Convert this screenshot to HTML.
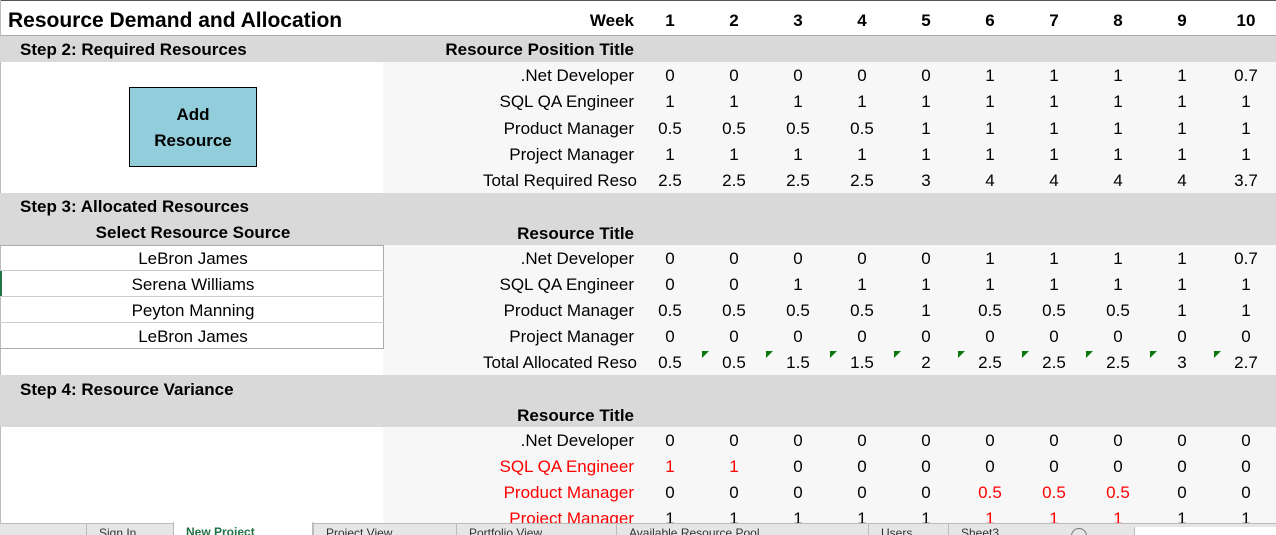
<!DOCTYPE html>
<html><head><meta charset="utf-8"><style>
body{margin:0;width:1276px;height:535px;overflow:hidden;background:#fff;font-family:"Liberation Sans Narrow","Liberation Sans",sans-serif;position:relative}
div{position:absolute;box-sizing:border-box}
.g{background:#d9d9d9;left:0;width:1276px}
.lt{background:#f7f7f7;left:383px;width:893px}
.t{font-size:17px;color:#000;white-space:nowrap;line-height:26px;height:26px;margin-top:1px}
.b{font-weight:bold}
.lab{left:383px;width:251px;text-align:right}
.r{color:#f00}
.row span{position:absolute;width:64px;text-align:center;top:0}
.tri{width:0;height:0;border-top:7px solid #0a7a0a;border-right:7px solid transparent}
.tab{top:523px;height:12px;border-left:1px solid #bbb;font-size:12px;line-height:20px;color:#333;overflow:hidden;padding-left:12px}
</style></head><body>
<div style="left:0;top:0;width:1276px;height:2px;border-top:1px solid #555"></div>
<div style="left:0;top:0;width:1px;height:523px;background:#bbb"></div>
<div class="t b" style="left:8px;top:7px;font-size:21px;font-family:'Liberation Sans',sans-serif">Resource Demand and Allocation</div>
<div class="g" style="top:35px;height:27px;border-top:1px solid #aaa"></div>
<div class="lt" style="top:62px;height:131px"></div>
<div class="g" style="top:193px;height:52px"></div>
<div class="lt" style="top:245px;height:130px"></div>
<div class="g" style="top:375px;height:52px"></div>
<div class="lt" style="top:427px;height:96px"></div>

<div class="t b row" style="left:0;top:7px;width:1276px">
<span style="left:560px;width:74px;text-align:right">Week</span>
<span style="left:638px">1</span><span style="left:702px">2</span><span style="left:766px">3</span><span style="left:830px">4</span><span style="left:894px">5</span><span style="left:958px">6</span><span style="left:1022px">7</span><span style="left:1086px">8</span><span style="left:1150px">9</span><span style="left:1214px">10</span></div>

<div class="t b" style="left:20px;top:36px">Step 2: Required Resources</div>
<div class="t b lab" style="top:36px">Resource Position Title</div>
<div style="left:129px;top:87px;width:128px;height:80px;background:#92cddc;border:1px solid #000;text-align:center;font-weight:bold;font-size:17px;line-height:26px;padding-top:14px;font-family:'Liberation Sans',sans-serif">Add<br>Resource</div>

<div class="t lab" style="top:62px">.Net Developer</div>
<div class="t row" style="left:0;top:62px;width:1276px"><span style="left:638px">0</span><span style="left:702px">0</span><span style="left:766px">0</span><span style="left:830px">0</span><span style="left:894px">0</span><span style="left:958px">1</span><span style="left:1022px">1</span><span style="left:1086px">1</span><span style="left:1150px">1</span><span style="left:1214px">0.7</span></div>
<div class="t lab" style="top:88px">SQL QA Engineer</div>
<div class="t row" style="left:0;top:88px;width:1276px"><span style="left:638px">1</span><span style="left:702px">1</span><span style="left:766px">1</span><span style="left:830px">1</span><span style="left:894px">1</span><span style="left:958px">1</span><span style="left:1022px">1</span><span style="left:1086px">1</span><span style="left:1150px">1</span><span style="left:1214px">1</span></div>
<div class="t lab" style="top:115px">Product Manager</div>
<div class="t row" style="left:0;top:115px;width:1276px"><span style="left:638px">0.5</span><span style="left:702px">0.5</span><span style="left:766px">0.5</span><span style="left:830px">0.5</span><span style="left:894px">1</span><span style="left:958px">1</span><span style="left:1022px">1</span><span style="left:1086px">1</span><span style="left:1150px">1</span><span style="left:1214px">1</span></div>
<div class="t lab" style="top:141px">Project Manager</div>
<div class="t row" style="left:0;top:141px;width:1276px"><span style="left:638px">1</span><span style="left:702px">1</span><span style="left:766px">1</span><span style="left:830px">1</span><span style="left:894px">1</span><span style="left:958px">1</span><span style="left:1022px">1</span><span style="left:1086px">1</span><span style="left:1150px">1</span><span style="left:1214px">1</span></div>
<div class="t lab" style="top:167px;width:254px">Total Required Reso</div>
<div class="t row" style="left:0;top:167px;width:1276px"><span style="left:638px">2.5</span><span style="left:702px">2.5</span><span style="left:766px">2.5</span><span style="left:830px">2.5</span><span style="left:894px">3</span><span style="left:958px">4</span><span style="left:1022px">4</span><span style="left:1086px">4</span><span style="left:1150px">4</span><span style="left:1214px">3.7</span></div>

<div class="t b" style="left:20px;top:193px">Step 3: Allocated Resources</div>
<div class="t b" style="left:0;top:219px;width:386px;text-align:center">Select Resource Source</div>
<div class="t b lab" style="top:220px">Resource Title</div>

<div style="left:0;top:245px;width:384px;height:104px;border:1px solid #aaa;border-left:none"></div>
<div style="left:0;top:270px;width:384px;height:1px;background:#ccc"></div>
<div style="left:0;top:296px;width:384px;height:1px;background:#ccc"></div>
<div style="left:0;top:322px;width:384px;height:1px;background:#ccc"></div>
<div style="left:0;top:271px;width:2px;height:25px;background:#217346"></div>
<div class="t" style="left:0;top:245px;width:386px;text-align:center">LeBron James</div>
<div class="t" style="left:0;top:271px;width:386px;text-align:center">Serena Williams</div>
<div class="t" style="left:0;top:297px;width:386px;text-align:center">Peyton Manning</div>
<div class="t" style="left:0;top:323px;width:386px;text-align:center">LeBron James</div>

<div class="t lab" style="top:245px">.Net Developer</div>
<div class="t row" style="left:0;top:245px;width:1276px"><span style="left:638px">0</span><span style="left:702px">0</span><span style="left:766px">0</span><span style="left:830px">0</span><span style="left:894px">0</span><span style="left:958px">1</span><span style="left:1022px">1</span><span style="left:1086px">1</span><span style="left:1150px">1</span><span style="left:1214px">0.7</span></div>
<div class="t lab" style="top:271px">SQL QA Engineer</div>
<div class="t row" style="left:0;top:271px;width:1276px"><span style="left:638px">0</span><span style="left:702px">0</span><span style="left:766px">1</span><span style="left:830px">1</span><span style="left:894px">1</span><span style="left:958px">1</span><span style="left:1022px">1</span><span style="left:1086px">1</span><span style="left:1150px">1</span><span style="left:1214px">1</span></div>
<div class="t lab" style="top:297px">Product Manager</div>
<div class="t row" style="left:0;top:297px;width:1276px"><span style="left:638px">0.5</span><span style="left:702px">0.5</span><span style="left:766px">0.5</span><span style="left:830px">0.5</span><span style="left:894px">1</span><span style="left:958px">0.5</span><span style="left:1022px">0.5</span><span style="left:1086px">0.5</span><span style="left:1150px">1</span><span style="left:1214px">1</span></div>
<div class="t lab" style="top:323px">Project Manager</div>
<div class="t row" style="left:0;top:323px;width:1276px"><span style="left:638px">0</span><span style="left:702px">0</span><span style="left:766px">0</span><span style="left:830px">0</span><span style="left:894px">0</span><span style="left:958px">0</span><span style="left:1022px">0</span><span style="left:1086px">0</span><span style="left:1150px">0</span><span style="left:1214px">0</span></div>
<div class="t lab" style="top:349px;width:254px">Total Allocated Reso</div>
<div class="t row" style="left:0;top:349px;width:1276px"><span style="left:638px">0.5</span><span style="left:702px">0.5</span><span style="left:766px">1.5</span><span style="left:830px">1.5</span><span style="left:894px">2</span><span style="left:958px">2.5</span><span style="left:1022px">2.5</span><span style="left:1086px">2.5</span><span style="left:1150px">3</span><span style="left:1214px">2.7</span></div>
<div class="tri" style="left:702px;top:351px"></div><div class="tri" style="left:766px;top:351px"></div><div class="tri" style="left:830px;top:351px"></div><div class="tri" style="left:894px;top:351px"></div><div class="tri" style="left:958px;top:351px"></div><div class="tri" style="left:1022px;top:351px"></div><div class="tri" style="left:1086px;top:351px"></div><div class="tri" style="left:1150px;top:351px"></div><div class="tri" style="left:1214px;top:351px"></div>

<div class="t b" style="left:20px;top:376px">Step 4: Resource Variance</div>
<div class="t b lab" style="top:402px">Resource Title</div>
<div class="t lab" style="top:427px">.Net Developer</div>
<div class="t row" style="left:0;top:427px;width:1276px"><span style="left:638px">0</span><span style="left:702px">0</span><span style="left:766px">0</span><span style="left:830px">0</span><span style="left:894px">0</span><span style="left:958px">0</span><span style="left:1022px">0</span><span style="left:1086px">0</span><span style="left:1150px">0</span><span style="left:1214px">0</span></div>
<div class="t lab r" style="top:453px">SQL QA Engineer</div>
<div class="t row" style="left:0;top:453px;width:1276px"><span class="r" style="left:638px">1</span><span class="r" style="left:702px">1</span><span style="left:766px">0</span><span style="left:830px">0</span><span style="left:894px">0</span><span style="left:958px">0</span><span style="left:1022px">0</span><span style="left:1086px">0</span><span style="left:1150px">0</span><span style="left:1214px">0</span></div>
<div class="t lab r" style="top:479px">Product Manager</div>
<div class="t row" style="left:0;top:479px;width:1276px"><span style="left:638px">0</span><span style="left:702px">0</span><span style="left:766px">0</span><span style="left:830px">0</span><span style="left:894px">0</span><span class="r" style="left:958px">0.5</span><span class="r" style="left:1022px">0.5</span><span class="r" style="left:1086px">0.5</span><span style="left:1150px">0</span><span style="left:1214px">0</span></div>
<div class="t lab r" style="top:505px">Project Manager</div>
<div class="t row" style="left:0;top:505px;width:1276px"><span style="left:638px">1</span><span style="left:702px">1</span><span style="left:766px">1</span><span style="left:830px">1</span><span style="left:894px">1</span><span class="r" style="left:958px">1</span><span class="r" style="left:1022px">1</span><span class="r" style="left:1086px">1</span><span style="left:1150px">1</span><span style="left:1214px">1</span></div>

<div style="left:0;top:523px;width:1276px;height:12px;background:#e6e6e6;border-top:1px solid #bbb"></div>
<div class="tab" style="left:86px;width:87px">Sign In</div>
<div class="tab" style="left:173px;width:140px;background:#fff;top:522px;height:13px;color:#217346;font-weight:bold;border-right:1px solid #bbb">New Project</div>
<div class="tab" style="left:313px;width:143px">Project View</div>
<div class="tab" style="left:456px;width:160px">Portfolio View</div>
<div class="tab" style="left:616px;width:252px">Available Resource Pool</div>
<div class="tab" style="left:868px;width:80px">Users</div>
<div class="tab" style="left:948px;width:110px">Sheet3</div>
<div style="left:1070px;top:528px;width:20px;height:7px;overflow:hidden"><div style="left:1px;top:0;width:16px;height:16px;border:1px solid #777;border-radius:50%"></div></div>
<div style="left:1134px;top:527px;width:142px;height:8px;background:#fff;border-left:1px solid #bbb"></div>
</body></html>
